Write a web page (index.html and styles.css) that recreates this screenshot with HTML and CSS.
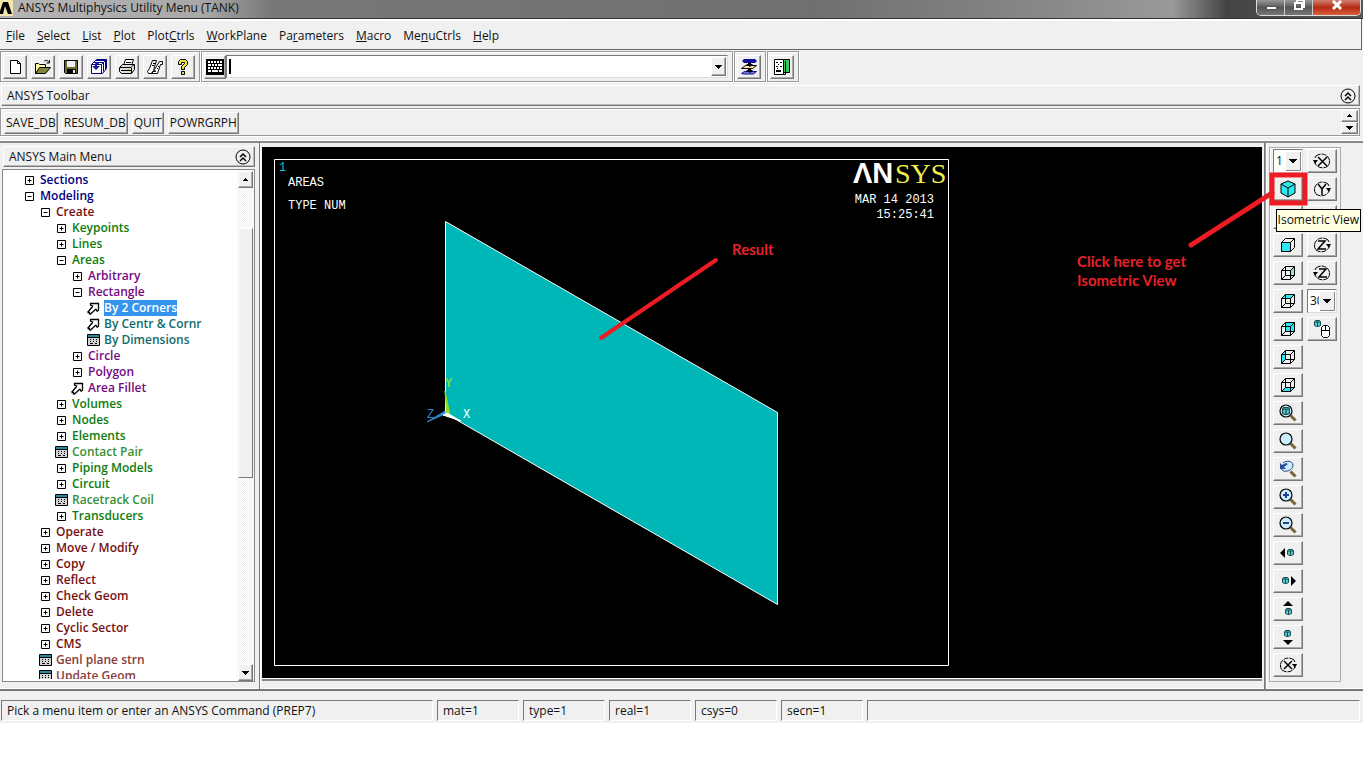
FILE: index.html
```html
<!DOCTYPE html>
<html lang="en">
<head>
    <meta charset="UTF-8">
    <meta name="viewport" content="width=device-width, initial-scale=1.0">
    <title>ANSYS Multiphysics Utility Menu (TANK)</title>
    <link rel="stylesheet" href="styles.css">
</head>
<body>

<!-- shared icons -->
<svg class="defs" aria-hidden="true">
    <symbol id="plus" viewBox="0 0 13 13"><path d="M2.5 2.5h8v8h-8zM4.5 6.5h4M6.5 4.5v4" fill="none" stroke="#000"/></symbol>
    <symbol id="minus" viewBox="0 0 13 13"><path d="M2.5 2.5h8v8h-8zM4.5 6.5h4" fill="none" stroke="#000"/></symbol>
    <symbol id="pick" viewBox="0 0 13 13"><path d="M3 1.500h9M11.500 1v8M3.500 1v2l2.500 1M11 9H10L9 7M6 4L.5 10.500M9 7l-6 5.500M.5 10.500h2v2" fill="none" stroke="#000" stroke-width="1.300"/></symbol>
    <symbol id="dialog" viewBox="0 0 13 13"><path d="M.5 .5h12v11h-12z" fill="#d4d4d4" stroke="#000"/><path d="M1 1h11v2H1z" fill="#2a8a90"/><path d="M0 3.500h13" stroke="#000"/><path d="M3 5.500h1m2 0h1m2 0h1M3 7.500h1m2 0h1m2 0h1M3 9.500h3m2 0h2" stroke="#000"/></symbol>
    <symbol id="collapse" viewBox="0 0 16 16"><circle cx="8" cy="8" r="7" fill="none" stroke="#000"/><path d="M5 8l3-3 3 3M5 12l3-3 3 3" fill="none" stroke="#000" stroke-width="1.500"/></symbol>
    <symbol id="up" viewBox="0 0 7 4"><path d="M3 0h1v1h1v1h1v1H1V2h1V1h1z"/></symbol>
    <symbol id="down" viewBox="0 0 7 4"><path d="M0 0h7v1H6v1H5v1H4v1H3V3H2V2H1V1H0z"/></symbol>
    <symbol id="wire" viewBox="0 0 14 14"><path d="M.5 4.500h9v9h-9zM4.500 .5h9v9h-9zM.5 4.500l4-4M9.500 4.500l4-4M9.500 13.500l4-4M.5 13.500l4-4" fill="none" stroke="#000"/></symbol>
    <symbol id="lens" viewBox="0 0 18 18"><circle cx="7" cy="7" r="6" fill="#c9ecff" stroke="#000" stroke-width="1.200"/><path d="M11.500 11.500l5 5" stroke="#75673a" stroke-width="3"/></symbol>
    <symbol id="node" viewBox="0 0 7 7"><path d="M1.500 .5h4l1 1v4l-2 1h-2l-2-1v-4z" fill="#5cc7cf" stroke="#124b50"/><path d="M1 2h5M3.500 2v4" stroke="#124b50"/></symbol>
    <symbol id="turn" viewBox="0 0 18 18"><path d="M15 4A8 7 0 0 0 1.500 9M3 14a8 7 0 0 0 13-3M1.500 9a8 7 0 0 0 1.500 5M15 4l1 2" fill="none" stroke="#000" stroke-dasharray="5 1"/><path d="M13 8h5l-2 4z"/></symbol>
    <symbol id="turnback" viewBox="0 0 18 18"><path d="M3 4a8 7 0 0 1 13.500 5M15 14A8 7 0 0 1 2 11M16.500 9a8 7 0 0 1-1.500 5M3 4L2 6" fill="none" stroke="#000" stroke-dasharray="5 1"/><path d="M0 8h5l-3 4z"/></symbol>
</svg>

<div class="window">
    <header class="titlebar">
        <svg class="app-icon" viewBox="0 0 13 16"><path d="M0 0h13v16H0z" fill="#f3e6a8"/><path d="M-1 14L3 2h5l4 12H8L5 6l-2 8z" fill="#000"/></svg>
        <h1>ANSYS Multiphysics Utility Menu (TANK)</h1>
        <div class="win-buttons">
            <button aria-label="Minimize"><svg viewBox="0 0 20 16"><path d="M5.500 6.500h10v3h-10z" fill="#fff" stroke="#555"/></svg></button>
            <button aria-label="Restore"><svg viewBox="0 0 20 16"><path d="M8 2V0h7v7h-2M6 3h7v6H6z" fill="none" stroke="#fff" stroke-width="2"/></svg></button>
            <button class="close" aria-label="Close"><svg viewBox="0 0 20 16"><path d="M6 1l8 8M14 1L6 9" stroke="#fff" stroke-width="3"/></svg></button>
        </div>
    </header>

    <nav class="menubar">
        <a href="#"><u>F</u>ile</a>
        <a href="#"><u>S</u>elect</a>
        <a href="#"><u>L</u>ist</a>
        <a href="#"><u>P</u>lot</a>
        <a href="#">Plot<u>C</u>trls</a>
        <a href="#"><u>W</u>orkPlane</a>
        <a href="#">Pa<u>r</u>ameters</a>
        <a href="#"><u>M</u>acro</a>
        <a href="#">Me<u>n</u>uCtrls</a>
        <a href="#"><u>H</u>elp</a>
    </nav>

    <div class="tools">
        <div class="group">
            <button aria-label="New"><svg viewBox="0 0 18 18"><path d="M4.500 2.500h7l3 3v10h-10z" fill="#fff" stroke="#000"/><path d="M11.500 2.500v3h3" fill="none" stroke="#000"/></svg></button>
            <button aria-label="Open"><svg viewBox="0 0 18 18"><path d="M1.500 15.500v-10h3l1 1h6v3" fill="#ffffa0" stroke="#000"/><path d="M1.500 15.500l4-6h11l-5 6z" fill="#85853a" stroke="#000"/><path d="M10 3.500c2-2 4-1 5 1M15.500 2v3h-3" fill="none" stroke="#000"/></svg></button>
            <button aria-label="Save"><svg viewBox="0 0 18 18"><path d="M2.500 2.500h13v13h-12l-1-1z" fill="#6c6c32" stroke="#000"/><path d="M5 3h8v6H5z" fill="#eee"/><path d="M5 11h9v5H5z"/><path d="M11 12h2v3h-2z" fill="#eee"/></svg></button>
            <button aria-label="Resume"><svg viewBox="0 0 18 18"><path d="M1.500 6.500l5-5h10v9l-4 5h-11z" fill="#fff" stroke="#000080"/><path d="M1.500 6.500h10v9M11.500 6.500l5-5M3.500 4.500h10v9M5.500 2.500h10v9" fill="none" stroke="#000080"/><path d="M8 4c-3 0-3 2-3 4H2l4 4 4-4H7c0-2 0-2 2-2z" fill="#1717a0"/></svg></button>
            <button aria-label="Print"><svg viewBox="0 0 18 18"><path d="M5.500 7.500l2-6h8l-2 6z" fill="#fff" stroke="#000"/><path d="M8 4.500h5M7 6.500h5" stroke="#000"/><path d="M1.500 9.500l3-3h12v5l-3 4h-10l-2-2z" fill="#ddd" stroke="#000"/><path d="M2 9.500h11l3-3M13.500 10v5M3 12.500h10" fill="none" stroke="#000"/><path d="M9 11h3v1H9z" fill="#dddd00"/></svg></button>
            <button aria-label="Report"><svg viewBox="0 0 18 18"><path d="M1.500 13.500l2-3 3-8h4l-2 6-1 5-2 2h-3zM8.500 11.500l5-8h3v3h-2l-3 9h-6l1-2h3z" fill="#fff" stroke="#000"/><path d="M7 5.500h2M6 7.500h2M12 8.500h1M11 10.500h1" stroke="#000"/></svg></button>
            <button aria-label="Help"><svg viewBox="0 0 18 18"><path d="M4.500 6.500v-3l2-2h5l2 2v3l-3 3v2h-3v-3l3-3v-1h-3v2zM7.500 13.500h3v3h-3z" fill="#eee238" stroke="#000"/></svg></button>
        </div>
        <div class="group command">
            <button class="keys" aria-label="Keyboard"><svg viewBox="0 0 18 16"><path d="M0 0h18v16H0z"/><path d="M2 3h2m1 0h2m1 0h2m1 0h2m1 0h2M2 6h3m1 0h2m1 0h2m1 0h4M2 9h2m1 0h2m1 0h2m1 0h2m1 0h2M2 12h3m1 0h6m1 0h3" stroke="#fff" stroke-width="2"/></svg></button>
            <div class="entry">
                <input type="text" aria-label="ANSYS command">
                <button class="drop" aria-label="Command history"><svg viewBox="0 0 7 4"><use href="#down"/></svg></button>
            </div>
        </div>
        <div class="group">
            <button aria-label="Raise hidden"><svg viewBox="0 0 18 18"><path d="M2 3l2-2h11l2 2-2 2H4z" fill="#10109a"/><path d="M1.500 10.500l4-3h11l-4 3z" fill="#ffe9a0" stroke="#000"/><path d="M1.500 15.500l3-2h12l-3 2.500h-10z" fill="#7777dd" stroke="#10109a"/><path d="M8 5h3v1h2l-3 3-4-3h2zM8 11h3v1h2l-3 3-4-3h2z"/></svg></button>
        </div>
        <div class="group">
            <button aria-label="Contact manager"><svg viewBox="0 0 18 18"><path d="M10.500 1.500h6v13h-6z" fill="#37c75a" stroke="#000"/><path d="M1.500 1.500h9v15h-9z" fill="#fff" stroke="#000"/><path d="M12.500 3v13.500h-2" fill="none" stroke="#000"/><path d="M3 4.500h2m2 0h2M5 6.500h1M3 8.500h2m2 0h2M4 10.500h1" stroke="#000"/><path d="M3 12h5v2H3z"/></svg></button>
        </div>
    </div>

    <div class="bar-title">
        <h2>ANSYS Toolbar</h2>
        <button class="round" aria-label="Collapse toolbar"><svg viewBox="0 0 16 16"><use href="#collapse"/></svg></button>
    </div>

    <div class="abbr">
        <button>SAVE_DB</button>
        <button>RESUM_DB</button>
        <button>QUIT</button>
        <button>POWRGRPH</button>
        <div class="spin">
            <button aria-label="Scroll up"><svg viewBox="0 0 7 4"><use href="#up"/></svg></button>
            <button aria-label="Scroll down"><svg viewBox="0 0 7 4"><use href="#down"/></svg></button>
        </div>
    </div>

    <main class="workspace">
        <aside class="sidebar">
            <div class="bar-title">
                <h2>ANSYS Main Menu</h2>
                <button class="round" aria-label="Collapse menu"><svg viewBox="0 0 16 16"><use href="#collapse"/></svg></button>
            </div>
            <div class="tree-box">
                <ul class="tree">
                    <li class="navy"><svg><use href="#plus"/></svg><a href="#">Sections</a></li>
                    <li class="navy"><svg><use href="#minus"/></svg><a href="#">Modeling</a></li>
                    <li class="l1"><svg><use href="#minus"/></svg><a href="#">Create</a></li>
                    <li class="l2"><svg><use href="#plus"/></svg><a href="#">Keypoints</a></li>
                    <li class="l2"><svg><use href="#plus"/></svg><a href="#">Lines</a></li>
                    <li class="l2"><svg><use href="#minus"/></svg><a href="#">Areas</a></li>
                    <li class="l3"><svg><use href="#plus"/></svg><a href="#">Arbitrary</a></li>
                    <li class="l3"><svg><use href="#minus"/></svg><a href="#">Rectangle</a></li>
                    <li class="l4 selected"><svg><use href="#pick"/></svg><a href="#">By 2 Corners</a></li>
                    <li class="l4"><svg><use href="#pick"/></svg><a href="#">By Centr &amp; Cornr</a></li>
                    <li class="l4"><svg><use href="#dialog"/></svg><a href="#">By Dimensions</a></li>
                    <li class="l3"><svg><use href="#plus"/></svg><a href="#">Circle</a></li>
                    <li class="l3"><svg><use href="#plus"/></svg><a href="#">Polygon</a></li>
                    <li class="l3"><svg><use href="#pick"/></svg><a href="#">Area Fillet</a></li>
                    <li class="l2"><svg><use href="#plus"/></svg><a href="#">Volumes</a></li>
                    <li class="l2"><svg><use href="#plus"/></svg><a href="#">Nodes</a></li>
                    <li class="l2"><svg><use href="#plus"/></svg><a href="#">Elements</a></li>
                    <li class="l2 leaf"><svg><use href="#dialog"/></svg><a href="#">Contact Pair</a></li>
                    <li class="l2"><svg><use href="#plus"/></svg><a href="#">Piping Models</a></li>
                    <li class="l2"><svg><use href="#plus"/></svg><a href="#">Circuit</a></li>
                    <li class="l2 leaf"><svg><use href="#dialog"/></svg><a href="#">Racetrack Coil</a></li>
                    <li class="l2"><svg><use href="#plus"/></svg><a href="#">Transducers</a></li>
                    <li class="l1"><svg><use href="#plus"/></svg><a href="#">Operate</a></li>
                    <li class="l1"><svg><use href="#plus"/></svg><a href="#">Move / Modify</a></li>
                    <li class="l1"><svg><use href="#plus"/></svg><a href="#">Copy</a></li>
                    <li class="l1"><svg><use href="#plus"/></svg><a href="#">Reflect</a></li>
                    <li class="l1"><svg><use href="#plus"/></svg><a href="#">Check Geom</a></li>
                    <li class="l1"><svg><use href="#plus"/></svg><a href="#">Delete</a></li>
                    <li class="l1"><svg><use href="#plus"/></svg><a href="#">Cyclic Sector</a></li>
                    <li class="l1"><svg><use href="#plus"/></svg><a href="#">CMS</a></li>
                    <li class="l1 leaf"><svg><use href="#dialog"/></svg><a href="#">Genl plane strn</a></li>
                    <li class="l1 leaf"><svg><use href="#dialog"/></svg><a href="#">Update Geom</a></li>
                </ul>
                <div class="scroll">
                    <button aria-label="Scroll up"><svg viewBox="0 0 7 4"><use href="#up"/></svg></button>
                    <div class="thumb"></div>
                    <button aria-label="Scroll down"><svg viewBox="0 0 7 4"><use href="#down"/></svg></button>
                </div>
            </div>
        </aside>

        <section class="graphics">
            <div class="screen">
                <svg class="plot" viewBox="0 0 675 507">
                    <path d="M.5 .5h674v506H.5z" fill="none" stroke="#fff"/>
                    <path d="M171.500 62.500L503.500 253.500V445.500L171.500 254.500z" fill="#00b7b7" stroke="#fff"/>
                    <path d="M173 258l-2-26 5 24z" fill="#8de01c" stroke="#8de01c"/>
                    <path d="M153 263l18-11v3z" fill="#2c86cc" stroke="#2c86cc"/>
                    <path d="M169 256l4-2 14 8z" fill="#fff" stroke="#fff"/>
                    <text x="171" y="228" fill="#a6e62c">Y</text>
                    <text x="153" y="259" fill="#2c86cc">Z</text>
                    <text x="189" y="259" fill="#fff">X</text>
                    <text x="5" y="12" fill="#00c8c8">1</text>
                    <text x="14" y="27" fill="#fff">AREAS</text>
                    <text x="14" y="50" fill="#fff">TYPE NUM</text>
                    <text x="660" y="44" fill="#fff" text-anchor="end">MAR 14 2013</text>
                    <text x="660" y="59" fill="#fff" text-anchor="end">15:25:41</text>
                    <text class="logo" x="579" y="24" fill="#fff">ΛN</text>
                    <text class="logo-serif" x="621" y="24" fill="#f4ee4a">SYS</text>
                    <path d="M327 179L442 101" stroke="#ed1c24" stroke-width="4" stroke-linecap="round"/>
                    <text class="note" x="458" y="96">Result</text>
                </svg>
                <p class="note hint">Click here to get<br>Isometric View</p>
            </div>
        </section>

        <aside class="views">
            <div class="view-tools">
                <div class="col">
                    <select aria-label="Active window"><option>1</option></select>
                    <button aria-label="Isometric view"><svg viewBox="0 0 18 18"><path d="M9 1l7 3v9l-7 4-7-4V4z" fill="#2fe9f2" stroke="#000"/><path d="M2 4l7 4 7-4M9 8v9" fill="none" stroke="#000"/></svg></button>
                    <button aria-label="Oblique view"></button>
                    <button aria-label="Front view"><svg class="cube" viewBox="0 0 14 14"><path d="M0 4h10v10H0z" fill="#2fe9f2"/><path d="M.5 4.500h9v9h-9zM.5 4.500l4-4h9v9l-4 4M9.500 4.500l4-4" fill="none" stroke="#000"/></svg></button>
                    <button aria-label="Right view"><svg class="cube" viewBox="0 0 14 14"><path d="M9 5l4-4v9l-4 4z" fill="#9adfe4"/><use href="#wire"/></svg></button>
                    <button aria-label="Top view"><svg class="cube" viewBox="0 0 14 14"><path d="M0 5l5-5h9l-4 5z" fill="#2fe9f2"/><use href="#wire"/></svg></button>
                    <button aria-label="Back view"><svg class="cube" viewBox="0 0 14 14"><path d="M4 0h10v10H4z" fill="#2fe9f2"/><use href="#wire"/></svg></button>
                    <button aria-label="Left view"><svg class="cube" viewBox="0 0 14 14"><path d="M0 5l5-5v9l-5 5z" fill="#2fe9f2"/><use href="#wire"/></svg></button>
                    <button aria-label="Bottom view"><svg class="cube" viewBox="0 0 14 14"><path d="M0 14l5-5h9l-4 5z" fill="#2fe9f2"/><use href="#wire"/></svg></button>
                    <button aria-label="Fit view"><svg viewBox="0 0 18 18"><use href="#lens"/><use href="#node" x="3" y="3" width="8" height="8"/></svg></button>
                    <button aria-label="Zoom view"><svg viewBox="0 0 18 18"><use href="#lens"/></svg></button>
                    <button aria-label="Back up"><svg viewBox="0 0 18 18"><path d="M4 3c3-3 10-2 10 2 0 3-3 6-6 6-3 1-6-1-6-3" fill="#c9ecff" stroke="#2c4a80"/><path d="M1 3v6h6L5 7l4-3-2-1-4 2z" fill="#2b4b9b"/><path d="M11.500 11.500l5 5" stroke="#75673a" stroke-width="3"/></svg></button>
                    <button aria-label="Zoom in"><svg viewBox="0 0 18 18"><use href="#lens"/><path d="M4 7h6M7 4v6" stroke="#263f8f" stroke-width="2"/></svg></button>
                    <button aria-label="Zoom out"><svg viewBox="0 0 18 18"><use href="#lens"/><path d="M4 7h6" stroke="#263f8f" stroke-width="2"/></svg></button>
                    <button aria-label="Pan left"><svg viewBox="0 0 18 18"><path d="M6 4v10L1 9z"/><use href="#node" x="8" y="5" width="7" height="7"/></svg></button>
                    <button aria-label="Pan right"><svg viewBox="0 0 18 18"><path d="M12 4v10l5-5z"/><use href="#node" x="3" y="5" width="7" height="7"/></svg></button>
                    <button aria-label="Pan up"><svg viewBox="0 0 18 18"><path d="M4 6h10L9 1z"/><use href="#node" x="6" y="8" width="7" height="7"/></svg></button>
                    <button aria-label="Pan down"><svg viewBox="0 0 18 18"><path d="M4 12h10l-5 5z"/><use href="#node" x="5" y="2" width="7" height="7"/></svg></button>
                    <button aria-label="Rotate about X"><svg viewBox="0 0 18 18"><use href="#turn"/><path d="M5 5l8 8M13 5l-8 8" stroke="#000" stroke-width="1.500"/></svg></button>
                </div>
                <div class="col">
                    <button aria-label="Rotate back about X"><svg viewBox="0 0 18 18"><use href="#turnback"/><path d="M5 5l9 9M14 5l-9 9" stroke="#000" stroke-width="1.500"/></svg></button>
                    <button aria-label="Rotate about Y"><svg viewBox="0 0 18 18"><use href="#turn"/><path d="M5 4l4 5 4-5M9 9v6" fill="none" stroke="#000" stroke-width="1.500"/></svg></button>
                    <button aria-label="Rotate back about Y"></button>
                    <button aria-label="Rotate about Z"><svg viewBox="0 0 18 18"><use href="#turn"/><path d="M5 5h7l-7 8h8" fill="none" stroke="#000" stroke-width="1.500"/></svg></button>
                    <button aria-label="Rotate back about Z"><svg viewBox="0 0 18 18"><use href="#turnback"/><path d="M6 5h7l-7 8h8" fill="none" stroke="#000" stroke-width="1.500"/></svg></button>
                    <select aria-label="Rate"><option>30</option></select>
                    <button aria-label="Dynamic mode"><svg viewBox="0 0 18 18"><use href="#node" x="1" y="0" width="7" height="7"/><path d="M8.500 7.500l2-2h4l2 2v8l-2 2h-4l-2-2zM9 10.500h7M12.500 6v4" fill="#fff" stroke="#000"/></svg></button>
                </div>
            </div>
            <svg class="callout" viewBox="0 0 120 76"><path d="M3 73L84 21" stroke="#ed1c24" stroke-width="5" stroke-linecap="round"/><path d="M84 3h33v28H84z" fill="none" stroke="#ed1c24" stroke-width="5"/></svg>
            <div class="tooltip" role="tooltip">Isometric View</div>
        </aside>
    </main>

    <footer class="status">
        <span class="prompt">Pick a menu item or enter an ANSYS Command (PREP7)</span>
        <span>mat=1</span>
        <span>type=1</span>
        <span>real=1</span>
        <span>csys=0</span>
        <span>secn=1</span>
        <span class="rest"></span>
    </footer>
</div>

</body>
</html>
```
FILE: styles.css
```css
* {
    box-sizing: border-box;
}
body {
    margin: 0;
    background: #fff;
    color: #111;
    font-family: "Open Sans", "Noto Sans", sans-serif;
    font-size: 12px;
    line-height: 16px;
}
h1, h2, p, ul {
    margin: 0;
    padding: 0;
    font-size: 12px;
    font-weight: normal;
}
a {
    color: inherit;
    text-decoration: none;
}
button, input, select {
    font: inherit;
    color: inherit;
    margin: 0;
    padding: 0;
    border-radius: 0;
}
button {
    display: flex;
    align-items: center;
    justify-content: center;
    background: #f0f0f0;
    border: 1px solid;
    border-color: #fff #777 #777 #fff;
    box-shadow: inset -1px -1px #aaa;
}
.defs {
    display: none;
}
.window {
    margin-right: 3px;
    background: #f0f0f0;
}

/* title bar */
.titlebar {
    display: flex;
    align-items: flex-start;
    gap: 5px;
    height: 19px;
    overflow: hidden;
    border-bottom: 1px solid #333;
    background: linear-gradient(90deg, #b5b5b5, #a8a8a8 15%, #777 20%, #707070 60%, #858585 75%, #999 86%, #444 90%, #555);
}
.app-icon {
    width: 13px;
    height: 16px;
}
.win-buttons {
    display: flex;
    height: 16px;
    margin: 0 2px 0 auto;
    border: 1px solid #ddd;
    border-top: 0;
    border-radius: 0 0 5px 5px;
    overflow: hidden;
}
.win-buttons button {
    width: 28px;
    border: 0;
    border-right: 1px solid #ccc;
    box-shadow: none;
    background: linear-gradient(#999, #555 50%, #777);
}
.win-buttons .close {
    width: 47px;
    border: 0;
    background: linear-gradient(#d08070, #b62a14 50%, #d8603c);
}
.win-buttons svg {
    width: 20px;
    height: 16px;
}

/* menus and tool rows */
.menubar {
    display: flex;
    gap: 12px;
    height: 31px;
    margin-right: 1px;
    padding: 9px 7px 0 6px;
    border: solid #666;
    border-width: 0 1px 1px 0;
    box-shadow: inset 0 2px #fff;
}
.tools {
    display: flex;
    gap: 1px;
    height: 35px;
    padding-top: 1px;
}
.group {
    display: flex;
    gap: 4px;
    height: 31px;
    padding: 3px 4px 3px 2px;
    border: 1px solid #999;
    box-shadow: inset 1px 1px #fff, 1px 1px #fff;
}
.group > button {
    width: 24px;
    height: 24px;
}
.group svg {
    width: 18px;
    height: 18px;
}
.command {
    gap: 0;
    width: 532px;
}
.group > .keys {
    width: 22px;
}
.entry {
    display: flex;
    flex: 1;
    height: 23px;
    border: 1px solid;
    border-color: #777 #ddd #ddd #777;
    background: #fff;
}
.entry input {
    flex: 1;
    min-width: 0;
    border: 0;
    outline: 0;
    background: linear-gradient(#000, #000) 2px 3px / 2px 15px no-repeat #fff;
}
.entry .drop {
    width: 15px;
    height: 19px;
    margin: 1px;
}
.entry .drop svg, .spin svg, .scroll svg {
    width: 7px;
    height: 4px;
}
.bar-title {
    display: flex;
    align-items: center;
    justify-content: space-between;
    height: 21px;
    margin: 0 3px 0 1px;
    padding: 0 3px 0 5px;
    border: 1px solid;
    border-color: #fff #777 #777 #fff;
    box-shadow: inset -1px -1px #bbb;
}
.round {
    border: 0;
    box-shadow: none;
    background: none;
}
.round svg {
    width: 16px;
    height: 16px;
}
.abbr {
    display: flex;
    gap: 4px;
    height: 28px;
    margin: 2px 3px 0 0;
    padding: 3px 0 0 3px;
    border: 1px solid #999;
    box-shadow: inset 1px 1px #fff, 0 1px #fff;
}
.abbr > button {
    height: 22px;
    padding: 0 1px;
}
.spin {
    width: 18px;
    margin: -2px 0 0 auto;
}
.spin button {
    width: 17px;
    height: 12px;
}

/* workspace */
.workspace {
    display: flex;
    margin-top: 5px;
    border-top: 2px solid #888;
    border-bottom: 2px solid #777;
    box-shadow: inset 0 -1px #fff, 0 -1px #fff;
}
.sidebar {
    width: 259px;
    padding: 3px 2px 7px 1px;
}
.sidebar .bar-title {
    margin-left: 2px;
    margin-right: 2px;
}
.tree-box {
    display: flex;
    height: 513px;
    margin: 2px 2px 0 1px;
    border: 1px solid #888;
    background: #fff;
    overflow: hidden;
}
.tree {
    flex: 1;
    height: 509px;
    padding-top: 2px;
    list-style: none;
    overflow: hidden;
    font-weight: 600;
}
.tree li {
    display: flex;
    align-items: center;
    gap: 4px;
    height: 16px;
    padding-left: 20px;
}
.tree svg {
    flex: none;
    width: 13px;
    height: 13px;
}
.tree a {
    white-space: nowrap;
}
.tree .navy {
    color: #00007c;
}
.tree .l1 {
    padding-left: 36px;
    color: #760f0f;
}
.tree .l2 {
    padding-left: 52px;
    color: #0d7c0d;
}
.tree .l3 {
    padding-left: 68px;
    color: #750a80;
}
.tree .l4 {
    padding-left: 84px;
    color: #126c6c;
}
.tree .l1.leaf {
    color: #883c3c;
}
.tree .l2.leaf {
    color: #369136;
}
.tree .selected a {
    color: #fff;
    background: #3594ee;
}
.scroll {
    display: flex;
    flex-direction: column;
    width: 17px;
    padding: 1px 1px 0;
    background: repeating-conic-gradient(#f0f0f0 0 25%, #fff 0 50%) 0 0 / 2px 2px;
}
.scroll button {
    width: 15px;
    height: 17px;
}
.thumb {
    height: 250px;
    margin: 40px 0 auto;
    background: #f0f0f0;
    border: 1px solid;
    border-color: #fff #777 #777 #fff;
}
.graphics {
    flex: 1;
    padding: 4px 2px 5px 2px;
    border: solid #777;
    border-width: 0 1px;
    box-shadow: inset 1px 0 #fff;
}
.screen {
    position: relative;
    height: 531px;
    padding: 12px;
    background: #000;
    box-shadow: 0 1px #fff, 0 3px #888;
    overflow: hidden;
}
.plot {
    display: block;
    width: 675px;
    height: 507px;
    overflow: visible;
    font-family: "Liberation Mono", monospace;
    font-size: 12px;
}
.logo {
    font: bold 29px "Liberation Sans", sans-serif;
}
.logo-serif {
    font: 28px "Liberation Serif", serif;
}
.note {
    font: bold 15px/19px Lato, sans-serif;
    color: #e8202a;
    fill: #e8202a;
}
.hint {
    position: absolute;
    top: 105px;
    right: 76px;
}
.views {
    position: relative;
    width: 98px;
    padding: 4px 0 4px 3px;
    border-left: 1px solid #999;
    box-shadow: inset 1px 0 #fff;
}
.view-tools {
    display: flex;
    gap: 4px;
    width: 72px;
    padding: 1px 3px 4px;
    border: 1px solid #aaa;
    box-shadow: inset 1px 1px #fff;
}
.col {
    display: flex;
    flex-direction: column;
    gap: 4px;
}
.col button, .col select {
    width: 30px;
    height: 24px;
}
.col svg {
    width: 18px;
    height: 18px;
}
.col .cube {
    width: 14px;
    height: 14px;
}
.col select {
    appearance: none;
    padding: 0 17px 0 2px;
    border: 1px solid;
    border-color: #777 #ddd #ddd #777;
    background: conic-gradient(from 315deg at 50% 100%, #000 90deg, transparent 0) 15px 9px / 8px 4px no-repeat,
        linear-gradient(#f0f0f0, #f0f0f0) 12px 2px / 14px 18px no-repeat,
        linear-gradient(#888, #888) 12px 2px / 15px 19px no-repeat #fff;
}
.callout {
    position: absolute;
    top: 29px;
    left: -78px;
    width: 120px;
    height: 76px;
}
.tooltip {
    position: absolute;
    top: 66px;
    right: 2px;
    padding: 2px 1px 3px;
    border: 1px solid #000;
    background: #ffffe1;
    white-space: nowrap;
}

/* status line */
.status {
    display: flex;
    gap: 4px;
    padding: 9px 3px 2px 1px;
}
.status span {
    width: 82px;
    height: 21px;
    padding: 2px 5px;
    border: 1px solid;
    border-color: #777 #fff #fff #777;
    white-space: nowrap;
}
.status .prompt {
    width: 432px;
}
.status .rest {
    flex: 1;
}
```
